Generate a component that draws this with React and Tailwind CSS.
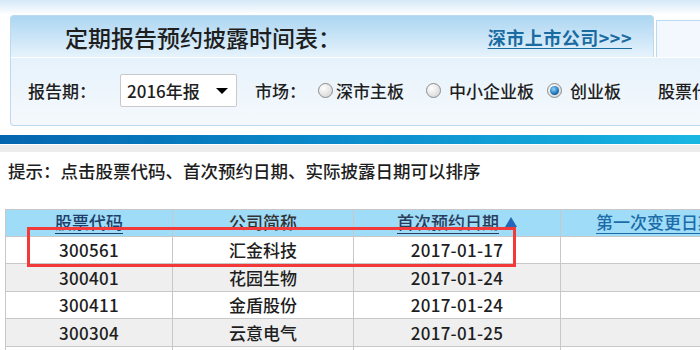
const rows = [
  { code: '300561', name: '汇金科技', date: '2017-01-17', h: 'h-[27px]', bg: 'bg-white' },
  { code: '300401', name: '花园生物', date: '2017-01-24', h: 'h-[28px]', bg: 'bg-[#efefef]' },
  { code: '300411', name: '金盾股份', date: '2017-01-24', h: 'h-[27px]', bg: 'bg-white' },
  { code: '300304', name: '云意电气', date: '2017-01-25', h: 'h-[28px]', bg: 'bg-[#efefef]' },
  { code: '', name: '', date: '', h: 'h-[28px]', bg: 'bg-white' },
];

function Radio({ checked }) {
  return (
    <span className="w-[15px] h-[15px] rounded-full border border-[#8c8c8c] bg-[radial-gradient(circle_at_35%_30%,#ffffff,#cfcfcf)] flex items-center justify-center shrink-0">
      {checked && (
        <span className="w-[9px] h-[9px] rounded-full bg-[radial-gradient(circle_at_40%_35%,#8ad6ff,#0b5fa8_70%)]" />
      )}
    </span>
  );
}

export default function App() {
  return (
    <div
      className="w-[700px] h-[350px] overflow-hidden bg-white relative text-[#1e1e1e] font-medium"
      style={{ fontFamily: '"Noto Sans CJK SC", "Noto Sans", sans-serif' }}
    >
      {/* top strip */}
      <div className="h-[15px] bg-gradient-to-b from-[#d4e9f7] to-white" />

      {/* filter panel */}
      <div className="ml-[10px] w-[820px]">
        <div className="flex items-end h-[42px]">
          <div className="w-[644px] h-[42px] border-t border-l border-r border-[#bcd9ef] rounded-t-[4px] bg-gradient-to-b from-[#acd6f2] to-[#e6f3fc] flex items-center">
            <span className="ml-[54px] text-[23px] leading-none mt-[2px]">定期报告预约披露时间表：</span>
            <span className="ml-auto mr-[21px] text-[18px] font-bold text-[#1a6ba0] underline underline-offset-[3px] leading-none tracking-[0.5px]">
              深市上市公司&gt;&gt;&gt;
            </span>
          </div>
          <div className="ml-[2px] w-[150px] h-[37px] border border-b-0 border-[#bcd9ef] bg-[#f2f8fd]" />
        </div>
        <div className="h-[69px] border border-t-white border-[#bcd9ef] rounded-b-[4px] bg-gradient-to-b from-[#e6f2fb] to-[#f5f9fd] flex items-center text-[17px] leading-none pb-[2px] whitespace-nowrap">
          <span className="ml-[17px]">报告期：</span>
          <div className="ml-[24px] w-[117px] h-[33px] bg-white border border-[#c9c9c9] rounded-[2px] flex items-center pl-[6px]">
            <span>2016年报</span>
            <span className="ml-auto mr-[8px] w-0 h-0 border-l-[6px] border-r-[6px] border-t-[6px] border-l-transparent border-r-transparent border-t-black" />
          </div>
          <span className="ml-[18px]">市场：</span>
          <span className="ml-[12px] flex items-center gap-[3px]"><Radio /><span>深市主板</span></span>
          <span className="ml-[22px] flex items-center gap-[8px]"><Radio /><span>中小企业板</span></span>
          <span className="ml-[13px] flex items-center gap-[8px]"><Radio checked /><span>创业板</span></span>
          <span className="ml-[37px]">股票代码：</span>
        </div>
      </div>

      {/* blue bar */}
      <div className="mt-[9px] h-[9px] bg-gradient-to-r from-[#0566ae] via-[#0c8ccc] to-[#1ab6e2]" />
      <div className="mt-[1px] h-[7px] bg-[#ececec]" />

      {/* hint */}
      <div className="pt-[7px] pl-[8px] text-[17.5px] leading-[24px] whitespace-nowrap">
        提示：点击股票代码、首次预约日期、实际披露日期可以排序
      </div>

      {/* table */}
      <div className="mt-[26px] ml-[5px] w-[800px] border-l border-t border-[#c8c8c8] text-[17px]">
        <div className="flex h-[27px] bg-[#9fdcf8]">
          <div className="w-[167px] border-r border-b border-[#c8c8c8] flex items-center justify-center pb-[2px]">
            <span className="underline underline-offset-[4px] text-[#1d3f6a]">股票代码</span>
          </div>
          <div className="w-[181px] border-r border-b border-[#c8c8c8] flex items-center justify-center pb-[2px]">
            <span className="text-[#333]">公司简称</span>
          </div>
          <div className="w-[207px] border-r border-b border-[#c8c8c8] flex items-center justify-center pb-[2px]">
            <span className="underline underline-offset-[4px] text-[#2a3d5c]">首次预约日期</span>
            <span className="ml-[6px] w-0 h-0 border-l-[6px] border-r-[6px] border-b-[10px] border-l-transparent border-r-transparent border-b-[#2466b8]" />
          </div>
          <div className="w-[244px] border-r border-b border-[#c8c8c8] flex items-center pl-[35px] pb-[2px]">
            <span className="underline underline-offset-[4px] text-[#1b6ca8] whitespace-nowrap">第一次变更日期</span>
          </div>
        </div>
        {rows.map((r, i) => (
          <div key={i} className={`flex ${r.h} ${r.bg}`}>
            <div className="w-[167px] border-r border-b border-[#c8c8c8] flex items-center justify-center tracking-[0.3px]">{r.code}</div>
            <div className="w-[181px] border-r border-b border-[#c8c8c8] flex items-center justify-center">{r.name}</div>
            <div className="w-[207px] border-r border-b border-[#c8c8c8] flex items-center justify-center tracking-[0.3px]">{r.date}</div>
            <div className="w-[244px] border-r border-b border-[#c8c8c8]" />
          </div>
        ))}
      </div>

      {/* highlight annotation */}
      <div className="absolute left-[27px] top-[227px] w-[489px] h-[40px] border-[3px] border-[#f23a3a]" />
    </div>
  );
}
